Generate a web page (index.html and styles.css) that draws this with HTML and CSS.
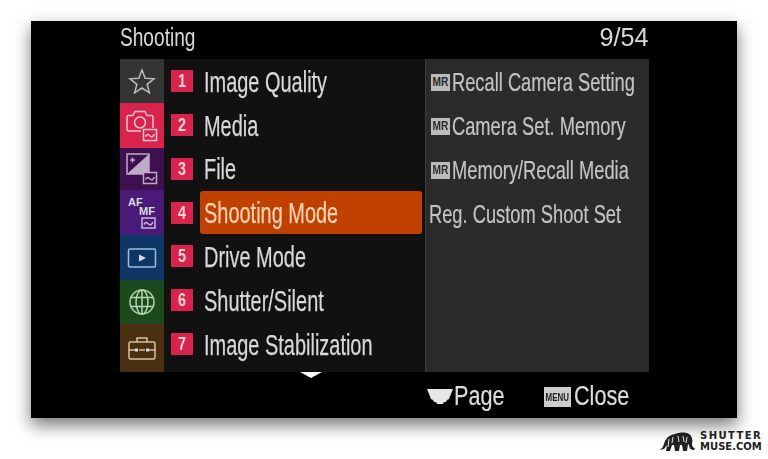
FILE: index.html

```html
<!DOCTYPE html>
<html lang="en">
<head>
  <meta charset="UTF-8">
  <title>Shooting menu</title>
  <link rel="stylesheet" href="styles.css">
</head>
<body>

<div class="screen">
  <div class="top">
    <span class="sq sq-top">Shooting</span>
    <span class="count"><span class="sq sq-count">9/54</span></span>
  </div>

  <div class="panel">
    <div class="tabs">
      <div class="tab tab-star">
        <svg width="28" height="26" viewBox="0 0 28 26"><path d="M14 2l3.2 8.3 8.8.5-6.900 5.500 2.300 8.500-7.400-4.800-7.400 4.800 2.300-8.500L2 10.800l8.800-.5z"/></svg>
      </div>
      <div class="tab tab-camera">
        <svg width="32" height="32" viewBox="0 0 32 32">
          <path d="M7 5.500l2-4h10l2 4h4.500A1.500 1.500 0 0 1 27 7v11M15 21H2.500A1.500 1.500 0 0 1 1 19.500V7a1.500 1.500 0 0 1 1.500-1.500H7"/>
          <circle cx="14" cy="12.500" r="5.500"/>
          <rect x="17.500" y="19.500" width="13" height="11" fill="#d8244c"/>
          <path d="M19.500 26.500c2-3 3-2 4.500-.500s3 1 4.500-2"/>
        </svg>
      </div>
      <div class="tab tab-expo">
        <svg width="32" height="32" viewBox="0 0 32 32">
          <path class="solid" d="M23 1v20H1z"/>
          <rect x="1" y="1" width="22" height="20"/>
          <path d="M4 7h5M6.500 4.500v5"/>
          <rect x="17.500" y="19.500" width="13" height="11" fill="#3f1050"/>
          <path d="M19.500 26.500c2-3 3-2 4.500-.500s3 1 4.500-2"/>
        </svg>
      </div>
      <div class="tab tab-af">
        <svg width="34" height="38" viewBox="0 0 34 38">
          <text x="3" y="12" class="af">AF</text>
          <text x="14" y="21" class="af">MF</text>
          <rect x="17" y="24" width="13" height="10"/>
          <path d="M19 30.500c2-3 3-2 4.500-.500s3 1 4.500-2"/>
        </svg>
      </div>
      <div class="tab tab-play">
        <svg width="30" height="22" viewBox="0 0 30 22">
          <rect x="1.500" y="2" width="27" height="18" rx="1.500"/>
          <path class="solid" d="M12 7.500l7 3.500-7 3.500z"/>
        </svg>
      </div>
      <div class="tab tab-globe">
        <svg width="28" height="28" viewBox="0 0 28 28">
          <circle cx="14" cy="14" r="12"/>
          <ellipse cx="14" cy="14" rx="6" ry="12"/>
          <path d="M14 2v24M3 9.500h22M3 18.500h22"/>
        </svg>
      </div>
      <div class="tab tab-tool">
        <svg width="30" height="26" viewBox="0 0 30 26">
          <rect x="2" y="7" width="26" height="17" rx="1.500"/>
          <path d="M10 7V3h10v4M2 15h6M12 15h6M22 15h6"/>
          <path class="solid" d="M8 13.500h3v3H8zM19 13.500h3v3h-3z"/>
        </svg>
      </div>
    </div>

    <ul class="rows">
      <li class="row"><span class="num"><span class="sq sq-num">1</span></span><span class="label"><span class="sq sq-label">Image Quality</span></span></li>
      <li class="row"><span class="num"><span class="sq sq-num">2</span></span><span class="label"><span class="sq sq-label">Media</span></span></li>
      <li class="row"><span class="num"><span class="sq sq-num">3</span></span><span class="label"><span class="sq sq-label">File</span></span></li>
      <li class="row active"><span class="num"><span class="sq sq-num">4</span></span><span class="label"><span class="sq sq-label">Shooting Mode</span></span></li>
      <li class="row"><span class="num"><span class="sq sq-num">5</span></span><span class="label"><span class="sq sq-label">Drive Mode</span></span></li>
      <li class="row"><span class="num"><span class="sq sq-num">6</span></span><span class="label"><span class="sq sq-label">Shutter/Silent</span></span></li>
      <li class="row"><span class="num"><span class="sq sq-num">7</span></span><span class="label"><span class="sq sq-label">Image Stabilization</span></span></li>
    </ul>

    <ul class="sub">
      <li class="sub-row"><span class="mr"><span class="sq sq-mr">MR</span></span><span class="sq sq-sub">Recall Camera Setting</span></li>
      <li class="sub-row"><span class="mr"><span class="sq sq-mr">MR</span></span><span class="sq sq-sub">Camera Set. Memory</span></li>
      <li class="sub-row"><span class="mr"><span class="sq sq-mr">MR</span></span><span class="sq sq-sub">Memory/Recall Media</span></li>
      <li class="sub-row"><span class="sq sq-sub">Reg. Custom Shoot Set</span></li>
    </ul>
  </div>

  <div class="bottom">
    <div class="more"></div>
    <div class="hint hint-page">
      <svg width="26" height="18" viewBox="0 0 26 18"><path d="M0 1h26l-4 10-2 1-1 2-2 0-1 2h-6l-1-2-2 0-1-2-2-1z"/></svg>
      <span class="sq sq-hint">Page</span>
    </div>
    <div class="hint hint-menu">
      <span class="menu-key"><span class="sq sq-menu">MENU</span></span>
      <span class="sq sq-hint">Close</span>
    </div>
  </div>
</div>

<div class="brand">
  <svg width="38" height="23" viewBox="0 0 38 23">
    <path d="M1 21c3-1 4-3 5-6 1-5 5-9 11-10 5-2 11-2 14 0 3 2 4 6 3 10 0 2 1 4 3 4l-1 2c-3 0-5-2-5-5l-1-1-1 7h-4l-1-6h-2l-1 6h-4l-1-6h-2l-2 6H8l1-6-3 4z"/>
    <path class="cuts" d="M11 10l-1 8M15 8l-1 6M20 7l1 6M25 7l1 6M29 8l-1 6"/>
  </svg>
  <div class="brand-text">
    <span class="brand-top">SHUTTER</span>
    <span class="brand-bottom">MUSE.COM</span>
  </div>
</div>

</body>
</html>
```

FILE: styles.css

```css
* { box-sizing: border-box; }
html, body { margin: 0; padding: 0; }
body {
  width: 768px;
  height: 459px;
  overflow: hidden;
  background: #fff;
  display: flex;
  flex-direction: column;
  font-family: "Liberation Sans", sans-serif;
}
ul { list-style: none; margin: 0; padding: 0; }

/* no condensed face is installed, so the text gets squeezed sideways */
.sq {
  display: inline-block;
  white-space: nowrap;
  transform-origin: left center;
}
.sq-top { transform: scaleX(.735); }
.sq-count { transform: scaleX(.97); transform-origin: right center; }
.sq-label { transform: scaleX(.665); -webkit-text-stroke: .25px; }
.sq-sub { transform: scaleX(.69); -webkit-text-stroke: .2px; }
.sq-num { transform: scaleX(.8); transform-origin: center; }
.sq-mr { transform: scaleX(.85); transform-origin: center; }
.sq-hint { transform: scaleX(.8); -webkit-text-stroke: .2px; }
.sq-menu { transform: scaleX(.72); transform-origin: center; }

.screen {
  width: 706px;
  height: 397px;
  margin: 21px 0 0 31px;
  padding: 0 88px 0 89px;
  background: #000;
  color: #d8d8d8;
  box-shadow: 0 7px 16px rgba(0,0,0,.55);
  flex: none;
  filter: blur(.4px);
}

.top {
  height: 38px;
  display: flex;
  justify-content: space-between;
  align-items: center;
  font-size: 26px;
  padding-bottom: 5px;
}

.panel {
  display: flex;
  height: 313px;
}

.tabs { width: 44px; flex: none; display: flex; flex-direction: column; }
.tab { flex: none; display: flex; align-items: center; justify-content: center; }
.tab svg { fill: none; stroke: #ddd; stroke-width: 1.500; }
.tab svg .solid { fill: #ddd; stroke: none; }
.tab svg .af { fill: #ddd; stroke: none; font: bold 11px "Liberation Sans", sans-serif; }
.tab-star { height: 44px; background: #343434; }
.tab-star svg { stroke: #bbb; }
.tab-camera { height: 45px; background: #d8244c; }
.tab-camera svg { stroke: #f3c4cd; }
.tab-expo { height: 42px; background: #3f1050; }
.tab-expo svg { stroke: #bcacc6; }
.tab-expo svg .solid { fill: #bcacc6; }
.tab-af { height: 45px; background: #4a1a78; }
.tab-af svg { stroke: #c9b6dd; }
.tab-play { height: 45px; background: #0e3768; }
.tab-play svg { stroke: #9cc0dc; }
.tab-globe { height: 44px; background: #1c4a1c; }
.tab-globe svg { stroke: #b5d3b0; }
.tab-tool { height: 48px; background: #4a3010; }
.tab-tool svg { stroke: #d6c29c; }

.rows {
  width: 262px;
  flex: none;
  background: #111;
  display: flex;
  flex-direction: column;
  padding-top: .4px;
  border-right: 1px solid #3c3c3c;
}
.row {
  height: 43.800px;
  flex: none;
  display: flex;
  align-items: center;
  padding-left: 7px;
  font-size: 30px;
}
.num {
  width: 22px;
  height: 22px;
  margin-right: 7px;
  flex: none;
  background: #d8244c;
  color: #f2d0d6;
  font: bold 18px/22px "Liberation Sans", sans-serif;
  text-align: center;
}
.label {
  flex: 1;
  min-width: 0;
  margin-right: 3px;
  padding-left: 4px;
  height: 43px;
  line-height: 43px;
  border-radius: 3px;
}
.active .label { background: #c04000; color: #f9d4b4; }

.sub {
  flex: 1;
  min-width: 0;
  background: #2b2b2b;
  padding-top: 1px;
  font-size: 26.500px;
  color: #c4c4c4;
}
.sub-row {
  height: 44px;
  display: flex;
  align-items: center;
  padding-left: 3px;
}
.mr {
  width: 19px;
  height: 17px;
  margin: 0 2px 0 2px;
  flex: none;
  background: #bbb;
  color: #2b2b2b;
  font: bold 12px/17px "Liberation Sans", sans-serif;
  text-align: center;
}

.bottom {
  height: 46px;
  display: flex;
  align-items: center;
  font-size: 27px;
  color: #ddd;
  padding-top: 3px;
}
.more {
  align-self: flex-start;
  margin: -3px 105px 0 180px;
  border-left: 11px solid transparent;
  border-right: 11px solid transparent;
  border-top: 6px solid #fff;
}
.hint { display: flex; align-items: center; }
.hint-page { width: 117px; }
.hint-page svg { fill: #e6e6e6; margin-right: 1px; }
.menu-key {
  width: 27px;
  height: 20px;
  margin-right: 3px;
  flex: none;
  display: flex;
  justify-content: center;
  background: #ccc;
  color: #222;
  font: bold 11px/20px "Liberation Sans", sans-serif;
}

.brand {
  align-self: flex-end;
  display: flex;
  align-items: center;
  margin: 11px 6px 0 0;
}
.brand svg { fill: #222; margin-right: 4px; }
.brand svg .cuts { fill: none; stroke: #fff; stroke-width: .9; }
.brand-text {
  font: bold 10px/11px "DejaVu Sans", sans-serif;
  color: #222;
  display: flex;
  flex-direction: column;
}
.brand-top { letter-spacing: 1.400px; }
```
